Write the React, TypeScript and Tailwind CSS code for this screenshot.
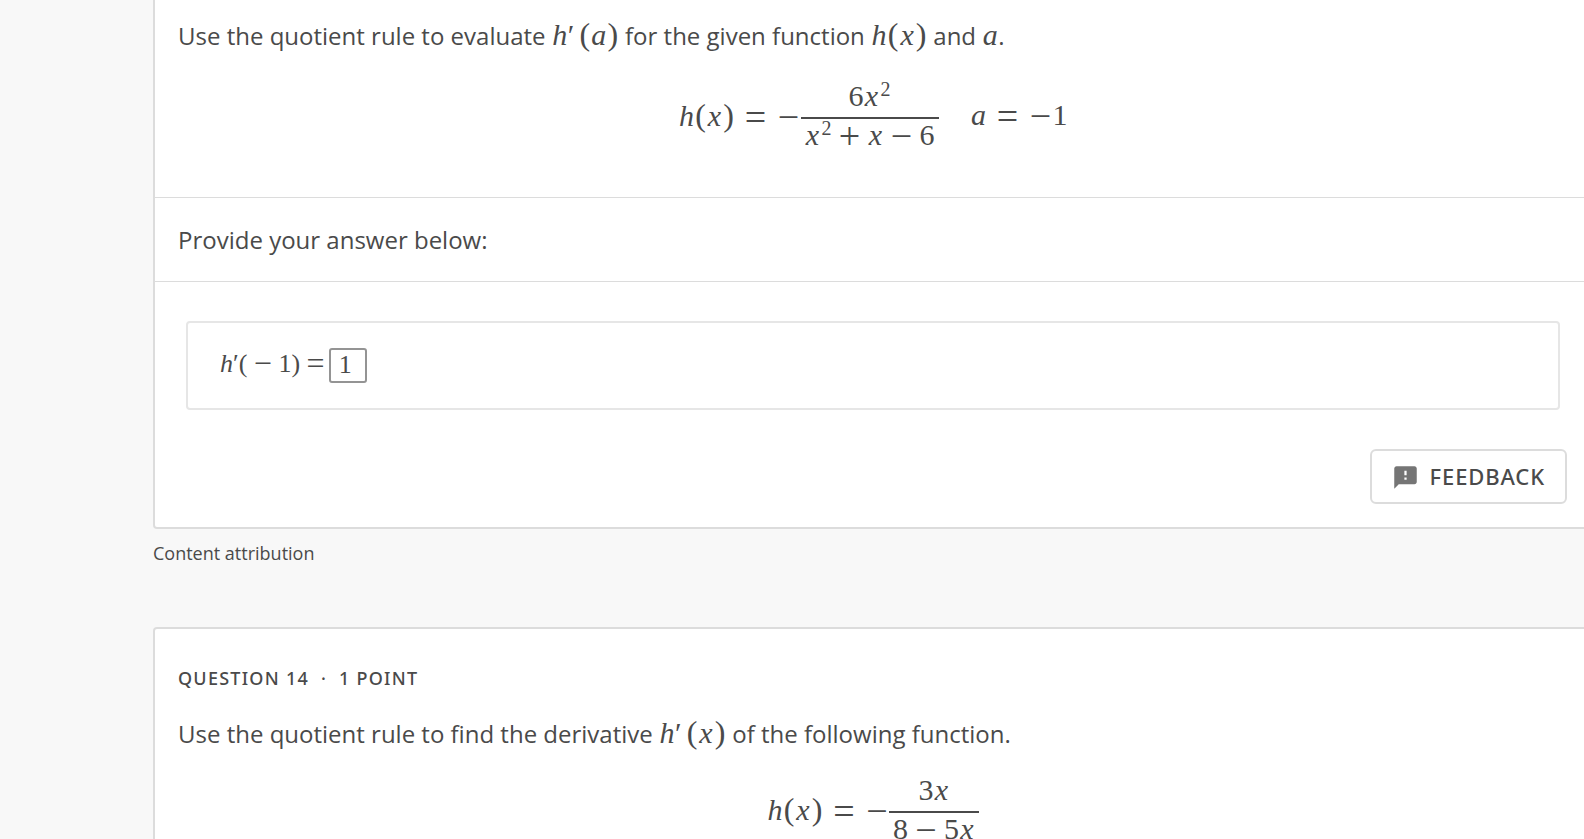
import React, { useState } from 'react';

const Var = ({ children }: { children: React.ReactNode }) => (
    <i className="inline-block w-4 text-center font-['Liberation_Serif',serif] text-[30px] leading-none">{children}</i>
);

const Num = ({ children }: { children: React.ReactNode }) => (
    <span className="font-['Liberation_Serif',serif] text-[30px] leading-none">{children}</span>
);

const Prime = () => (
    <span className="inline-block w-[11px] font-['Liberation_Serif',serif] text-[30px] leading-none">′</span>
);

const Paren = ({ children }: { children: React.ReactNode }) => (
    <span className="inline-block w-3 text-center font-['Liberation_Serif',serif] text-[32px] leading-none">{children}</span>
);

const Op = ({ children }: { children: React.ReactNode }) => (
    <span className="inline-block w-9 text-center align-[-4px] font-['Liberation_Serif',serif] text-[38px] leading-[30px]">{children}</span>
);

const Equals = () => (
    <span className="inline-block w-[42px] text-center align-[-4px] font-['Liberation_Serif',serif] text-[38px] leading-[30px]">=</span>
);

// minus sign in front of a number or a fraction, no space after it
const Neg = () => (
    <span className="inline-block w-6 text-center align-[-4px] font-['Liberation_Serif',serif] text-[38px] leading-[30px]">−</span>
);

const Squared = () => (
    <sup className="ml-px font-['Liberation_Serif',serif] text-xl leading-none">2</sup>
);

const Fn = ({ arg, prime }: { arg: string; prime?: boolean }) => (
    <span className="whitespace-nowrap leading-none">
        <Var>h</Var>
        {prime && <Prime />}
        <Paren>(</Paren>
        <Var>{arg}</Var>
        <Paren>)</Paren>
    </span>
);

interface FractionProps {
    top: React.ReactNode;
    bottom: React.ReactNode;
}

const Fraction: React.FC<FractionProps> = ({ top, bottom }) => (
    <span className="flex flex-col items-center whitespace-nowrap">
        <span className="h-9 leading-[34px]">{top}</span>
        <span className="h-[2px] w-full bg-[#4a4a4a]" />
        <span className="h-9 px-1 leading-10">{bottom}</span>
    </span>
);

const FeedbackIcon = () => (
    <svg viewBox="0 0 24 24" className="mt-0.5 size-[27px]" fill="#757575" aria-hidden="true">
        <path d="M20 2H4c-1.1 0-1.99.9-1.99 2L2 22l4-4h14c1.1 0 2-.9 2-2V4c0-1.1-.9-2-2-2zm-7 12h-2v-2h2v2zm0-4h-2V6h2v4z" />
    </svg>
);

const App: React.FC = () => {
    const [answer, setAnswer] = useState<string>('1');

    return (
        <div className="min-h-screen overflow-x-hidden bg-[#f8f8f8] font-['Open_Sans',sans-serif] text-[#4a4a4a]">
            <main className="-mr-[9px] ml-[153px]">
                {/* Question 13 */}
                <section className="rounded-b-sm border-2 border-t-0 border-[#dcdcdc] bg-white">
                    <div className="h-[198px] border-b border-[#dcdcdc] px-[23px] pt-4">
                        <p className="h-10 text-2xl leading-10">
                            Use the quotient rule to evaluate <Fn arg="a" prime /> for the given function <Fn arg="x" /> and <Var>a</Var>.
                        </p>
                        <div className="mt-[25px] flex items-center justify-center">
                            <span className="leading-9"><Fn arg="x" /><Equals /><Neg /></span>
                            <Fraction
                                top={<><Num>6</Num><Var>x</Var><Squared /></>}
                                bottom={<><Var>x</Var><Squared /><Op>+</Op><Var>x</Var><Op>−</Op><Num>6</Num></>}
                            />
                            <span className="pl-8 leading-9"><Var>a</Var><Equals /><Neg /><Num>1</Num></span>
                        </div>
                    </div>

                    <div className="border-b border-[#dcdcdc] px-[23px] py-[22px]">
                        <p className="text-2xl leading-[39px]">Provide your answer below:</p>
                    </div>

                    <div className="px-[31px] pt-[39px]">
                        <div className="flex h-[89px] items-center rounded-sm border-2 border-[#e6e6e6] px-8">
                            <label htmlFor="answer" className="pb-1 font-['Liberation_Serif',serif] text-[26px] leading-8">
                                <i>h</i>′( <span className="align-[-2px] text-[32px] leading-none">−</span> 1) <span className="align-[-2px] text-[32px] leading-none">=</span>
                            </label>
                            <input
                                id="answer"
                                value={answer}
                                onChange={(e) => setAnswer(e.target.value)}
                                className="ml-1 h-[35px] w-[38px] rounded-[3px] border-2 border-[#949494] pb-0.5 pl-2 font-['Liberation_Serif',serif] text-[26px]"
                            />
                        </div>
                    </div>

                    <div className="flex justify-end px-6 pt-[39px] pb-[23px]">
                        <button className="flex h-[55px] items-center gap-[11px] rounded-md border-2 border-[#dcdcdc] px-5 font-['Noto_Sans',sans-serif] text-[22px] font-medium tracking-[0.04em]">
                            <FeedbackIcon />
                            FEEDBACK
                        </button>
                    </div>
                </section>

                <a href="#attribution" className="mt-[10px] block w-fit text-lg leading-7 font-medium">Content attribution</a>

                {/* Question 14 */}
                <section className="mt-15 rounded-t-sm border-2 border-b-0 border-[#dcdcdc] bg-white px-[23px] pt-[35px]">
                    <h2 className="font-['Noto_Sans',sans-serif] text-lg leading-7 font-medium tracking-[0.07em] whitespace-pre">QUESTION 14  ·  1 POINT</h2>
                    <p className="mt-[22px] h-10 text-2xl leading-10">
                        Use the quotient rule to find the derivative <Fn arg="x" prime /> of the following function.
                    </p>
                    <div className="mt-[21px] flex items-center justify-center">
                        <span className="leading-9"><Fn arg="x" /><Equals /><Neg /></span>
                        <Fraction
                            top={<><Num>3</Num><Var>x</Var></>}
                            bottom={<><Num>8</Num><Op>−</Op><Num>5</Num><Var>x</Var></>}
                        />
                    </div>
                </section>
            </main>
        </div>
    );
};

export default App;
